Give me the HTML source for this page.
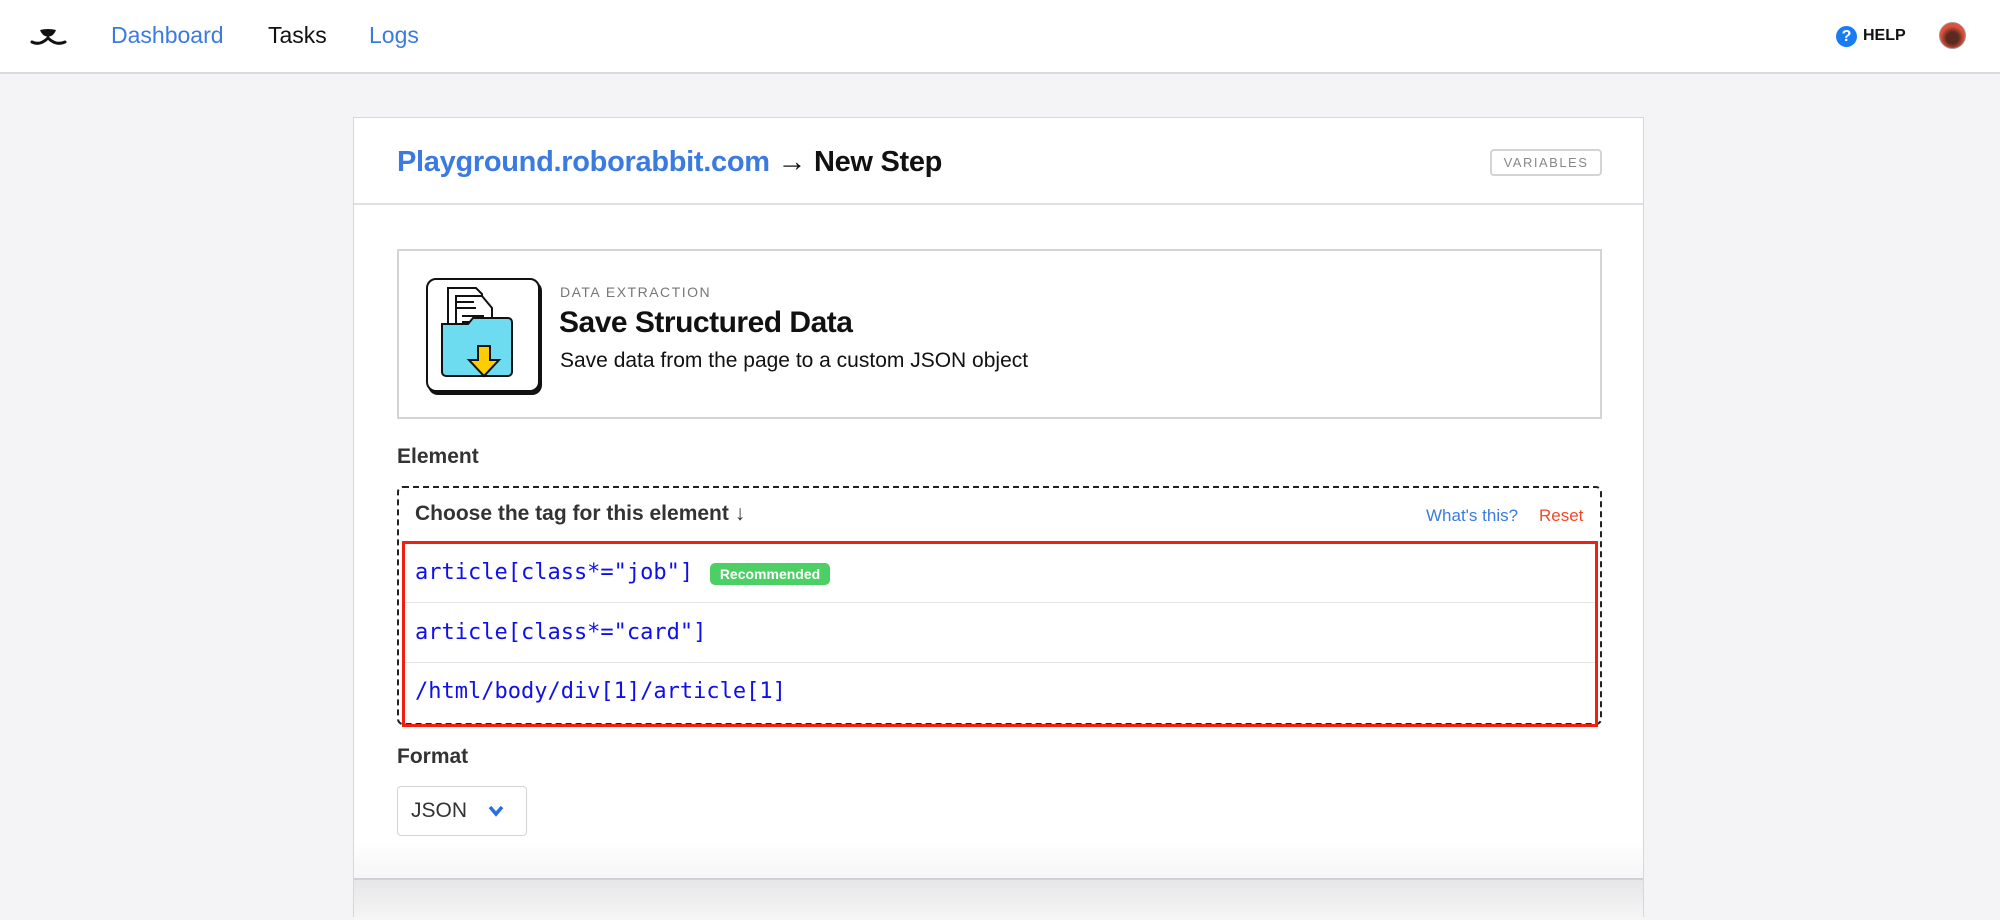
<!DOCTYPE html>
<html><head><meta charset="utf-8"><style>
*{box-sizing:border-box;margin:0;padding:0}
body{width:2000px;height:897px;overflow:hidden;background:#f4f4f7;font-family:"Liberation Sans",sans-serif;color:#111;position:relative}
.abs{position:absolute}
.hdr{left:0;top:0;width:2000px;height:74px;background:#fff;border-bottom:2px solid #d9d9e0}
.nav{font-size:23px;top:22px}
.card{left:353px;top:117px;width:1291px;height:800px;background:#fff;border:1px solid #d6d6dc}
.mono{font-family:"DejaVu Sans Mono","Liberation Mono",monospace;font-size:22px;color:#1010e8}
</style></head><body>
<div class="abs hdr">
  <svg class="abs" style="left:30px;top:28px" width="37" height="20" viewBox="0 0 37 20"><path d="M10 2 Q18 0 26 2 Q24 8 18 9 Q12 8 10 2Z" fill="#111"/><path d="M2 14 Q10 18 18 10 Q26 18 35 14" stroke="#111" stroke-width="3" fill="none" stroke-linecap="round"/></svg>
  <div class="abs nav" style="left:111px;color:#3b7be0">Dashboard</div>
  <div class="abs nav" style="left:268px;color:#111">Tasks</div>
  <div class="abs nav" style="left:369px;color:#3b7be0">Logs</div>
  <div class="abs" style="left:1836px;top:26px;width:21px;height:21px;border-radius:50%;background:#1a7cf0;color:#fff;font-weight:bold;font-size:16px;text-align:center;line-height:21px">?</div>
  <div class="abs" style="left:1863px;top:27px;font-size:16px;font-weight:bold">HELP</div>
  <div class="abs" style="left:1939px;top:22px;width:27px;height:27px;border-radius:50%;background:radial-gradient(circle at 50% 60%,#5a2a20 30%,#e0503a 60%);border:1px solid #999"></div>
</div>
<div class="abs card">
  <div class="abs" style="left:0;top:720px;width:100%;height:40px;background:linear-gradient(#fff,#f6f6f7)"></div>
  <div class="abs" style="left:0;top:760px;width:100%;height:2px;background:#d0d0d6"></div>
  <div class="abs" style="left:0;top:762px;width:100%;height:40px;background:linear-gradient(#e6e6e8,#f6f6f7)"></div>
  <div class="abs" style="left:0;top:0;width:100%;height:87px;border-bottom:2px solid #e0e0e4"></div>
  <div class="abs" style="left:43px;top:28px;font-size:29px;font-weight:bold;letter-spacing:-0.3px"><span style="color:#3b7be0">Playground.roborabbit.com</span> → New Step</div>
  <div class="abs" style="left:1136px;top:31px;width:112px;height:27px;border:2px solid #d4d4d8;border-radius:4px;font-size:13px;letter-spacing:1.5px;color:#888;text-align:center;line-height:23px">VARIABLES</div>
  <div class="abs" style="left:43px;top:131px;width:1205px;height:170px;border:2px solid #d4d4d8"></div>
  <div class="abs" style="left:72px;top:160px;width:114px;height:114px;border:2px solid #111;border-radius:10px;box-shadow:2px 3px 0 #111;background:#fff">
    <svg width="110" height="110" viewBox="0 0 110 110"><path d="M20 8h28l6 6v46H20Z" fill="#fff" stroke="#111" stroke-width="2"/><path d="M28 16h26l10 12v40H28Z" fill="#fff" stroke="#111" stroke-width="2"/><path d="M28 22h18M28 28h20M34 36h22M34 42h22M34 48h22" stroke="#111" stroke-width="2"/><path d="M14 44h26l5 -6h35a4 4 0 0 1 4 4v50a4 4 0 0 1-4 4H18a4 4 0 0 1-4-4Z" fill="#6ddcf0" stroke="#111" stroke-width="2"/><path d="M50 66h12v14h9l-15 16-15-16h9Z" fill="#ffcc00" stroke="#111" stroke-width="2"/></svg>
  </div>
  <div class="abs" style="left:206px;top:166px;font-size:14px;letter-spacing:1.5px;color:#777">DATA EXTRACTION</div>
  <div class="abs" style="left:205px;top:188px;font-size:30px;font-weight:bold;letter-spacing:-0.5px">Save Structured Data</div>
  <div class="abs" style="left:206px;top:231px;font-size:21px">Save data from the page to a custom JSON object</div>
  <div class="abs" style="left:43px;top:327px;font-size:21px;font-weight:bold;color:#333">Element</div>
  <div class="abs" style="left:43px;top:368px;width:1205px;height:239px;border:2px dashed #222;border-radius:6px"></div>
  <div class="abs" style="left:61px;top:384px;font-size:21px;font-weight:bold;color:#333">Choose the tag for this element ↓</div>
  <div class="abs" style="left:1072px;top:388px;font-size:17px;color:#3b7be0">What's this?</div>
  <div class="abs" style="left:1185px;top:388px;font-size:17px;color:#f04a2a">Reset</div>
  <div class="abs" style="left:48px;top:423px;width:1196px;height:186px;border:3px solid #f02010"></div>
  <div class="abs" style="left:51px;top:484px;width:1190px;height:1px;background:#e6e6e6"></div>
  <div class="abs" style="left:51px;top:544px;width:1190px;height:1px;background:#e6e6e6"></div>
  <div class="abs mono" style="left:61px;top:442px">article[class*="job"]</div>
  <div class="abs" style="left:356px;top:445px;width:120px;height:22px;border-radius:5px;background:#4cd066;color:#fff;font-size:14px;font-weight:bold;text-align:center;line-height:22px">Recommended</div>
  <div class="abs mono" style="left:61px;top:502px">article[class*="card"]</div>
  <div class="abs mono" style="left:61px;top:561px">/html/body/div[1]/article[1]</div>
  <div class="abs" style="left:43px;top:627px;font-size:21px;font-weight:bold;color:#333">Format</div>
  <div class="abs" style="left:43px;top:668px;width:130px;height:50px;border:1px solid #d4d4d8;border-radius:4px;background:#fff"></div>
  <div class="abs" style="left:57px;top:681px;font-size:21px;color:#333">JSON</div>
  <svg class="abs" style="left:134px;top:686px" width="16" height="14" viewBox="0 0 16 14"><path d="M2 3l6 7 6-7" stroke="#2a6de0" stroke-width="3.5" fill="none"/></svg>
</div>
</body></html>
